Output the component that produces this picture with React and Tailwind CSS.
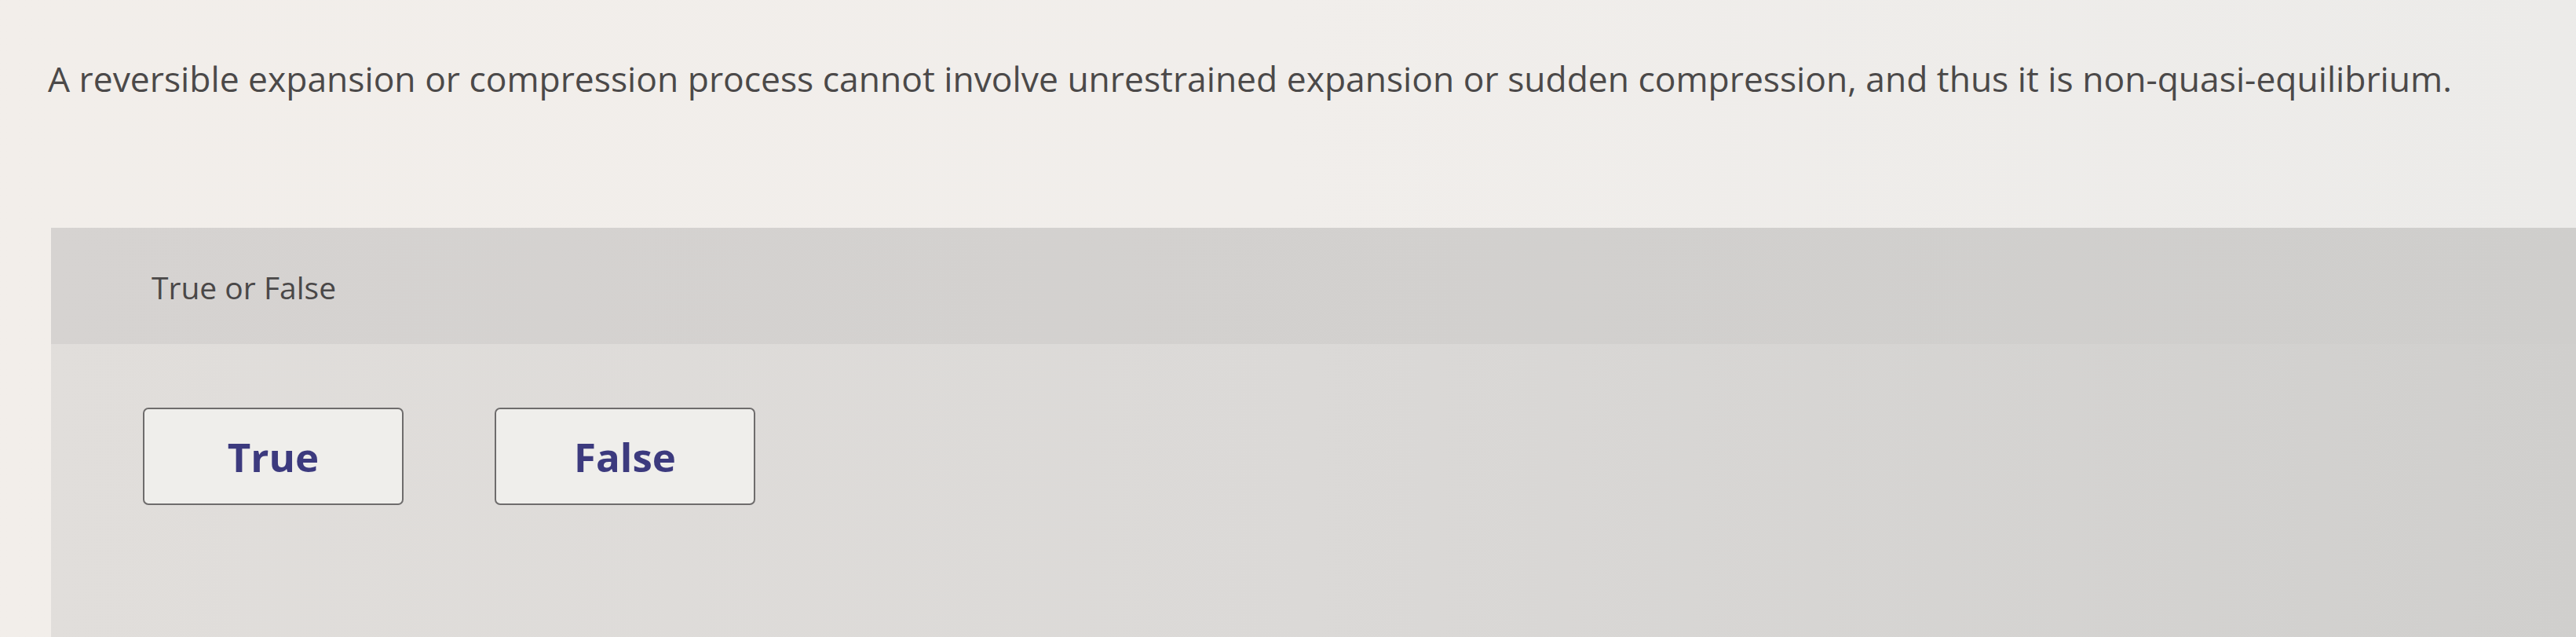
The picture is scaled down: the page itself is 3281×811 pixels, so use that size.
const OPTIONS = ['True', 'False']

function ChoiceButton({ label }) {
  return (
    <button
      type="button"
      className="flex h-[124px] w-[332px] items-center justify-center rounded-[7px] border-2 border-[#6e6c6c] bg-[#efeeeb] text-[51px] font-bold text-[#3c3a7e]"
    >
      {label}
    </button>
  )
}

export default function App() {
  return (
    <div
      className="h-[811px] w-full overflow-hidden bg-gradient-to-r from-[#f2eeea] via-[#f1eeeb] to-[#ecebe9]"
      style={{ fontFamily: '"Open Sans", "Liberation Sans", sans-serif' }}
    >
      {/* Prompt */}
      <p className="pl-[61px] pt-[74px] text-[44.4px] leading-[52px] text-[#4b4949]">
        A reversible expansion or compression process cannot involve unrestrained expansion or sudden compression, and thus it is non-quasi-equilibrium.
      </p>

      {/* Answer panel */}
      <div className="ml-[65px] mt-[164px] h-[600px]">
        <div className="flex h-[148px] items-center bg-gradient-to-r from-[#d6d3d1] to-[#cfcecc] pl-[128px] pt-[4px]">
          <span className="text-[39px] text-[#4a4848]">True or False</span>
        </div>
        <div className="flex h-full gap-[116px] bg-gradient-to-r from-[#e1dedb] via-[#dbd9d7] to-[#d0cfcd] pl-[117px] pt-[81px]">
          {OPTIONS.map(o => (
            <ChoiceButton key={o} label={o} />
          ))}
        </div>
      </div>
    </div>
  )
}
